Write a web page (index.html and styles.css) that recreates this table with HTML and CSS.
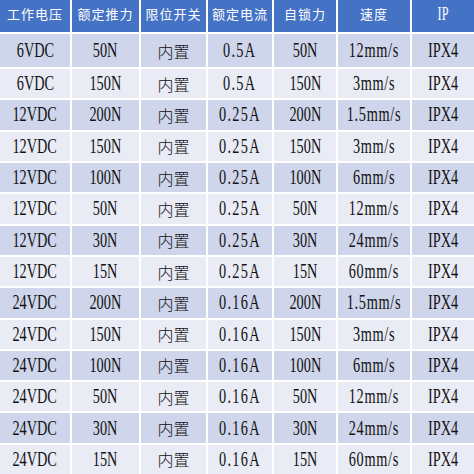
FILE: index.html
```html
<!DOCTYPE html>
<html lang="zh">
<head>
<meta charset="utf-8">
<title>参数表</title>
<link rel="stylesheet" href="styles.css">
</head>
<body>
<div class="table">
  <div class="row head">
    <div class="c"><span class="zh">工作电压</span></div>
    <div class="c"><span class="zh">额定推力</span></div>
    <div class="c"><span class="zh">限位开关</span></div>
    <div class="c"><span class="zh">额定电流</span></div>
    <div class="c"><span class="zh">自锁力</span></div>
    <div class="c"><span class="zh">速度</span></div>
    <div class="c"><span class="l">IP</span></div>
  </div>
  <div class="row odd first">
    <div class="c"><span class="l">6VDC</span></div><div class="c"><span class="l">50N</span></div><div class="c"><span class="zh">内置</span></div><div class="c"><span class="l dec">0.5A</span></div><div class="c"><span class="l">50N</span></div><div class="c"><span class="l spd">12mm/s</span></div><div class="c"><span class="l">IPX4</span></div>
  </div>
  <div class="row even">
    <div class="c"><span class="l">6VDC</span></div><div class="c"><span class="l">150N</span></div><div class="c"><span class="zh">内置</span></div><div class="c"><span class="l dec">0.5A</span></div><div class="c"><span class="l">150N</span></div><div class="c"><span class="l spd">3mm/s</span></div><div class="c"><span class="l">IPX4</span></div>
  </div>
  <div class="row odd">
    <div class="c"><span class="l">12VDC</span></div><div class="c"><span class="l">200N</span></div><div class="c"><span class="zh">内置</span></div><div class="c"><span class="l dec">0.25A</span></div><div class="c"><span class="l">200N</span></div><div class="c"><span class="l spd">1.5mm/s</span></div><div class="c"><span class="l">IPX4</span></div>
  </div>
  <div class="row even">
    <div class="c"><span class="l">12VDC</span></div><div class="c"><span class="l">150N</span></div><div class="c"><span class="zh">内置</span></div><div class="c"><span class="l dec">0.25A</span></div><div class="c"><span class="l">150N</span></div><div class="c"><span class="l spd">3mm/s</span></div><div class="c"><span class="l">IPX4</span></div>
  </div>
  <div class="row odd">
    <div class="c"><span class="l">12VDC</span></div><div class="c"><span class="l">100N</span></div><div class="c"><span class="zh">内置</span></div><div class="c"><span class="l dec">0.25A</span></div><div class="c"><span class="l">100N</span></div><div class="c"><span class="l spd">6mm/s</span></div><div class="c"><span class="l">IPX4</span></div>
  </div>
  <div class="row even">
    <div class="c"><span class="l">12VDC</span></div><div class="c"><span class="l">50N</span></div><div class="c"><span class="zh">内置</span></div><div class="c"><span class="l dec">0.25A</span></div><div class="c"><span class="l">50N</span></div><div class="c"><span class="l spd">12mm/s</span></div><div class="c"><span class="l">IPX4</span></div>
  </div>
  <div class="row odd">
    <div class="c"><span class="l">12VDC</span></div><div class="c"><span class="l">30N</span></div><div class="c"><span class="zh">内置</span></div><div class="c"><span class="l dec">0.25A</span></div><div class="c"><span class="l">30N</span></div><div class="c"><span class="l spd">24mm/s</span></div><div class="c"><span class="l">IPX4</span></div>
  </div>
  <div class="row even">
    <div class="c"><span class="l">12VDC</span></div><div class="c"><span class="l">15N</span></div><div class="c"><span class="zh">内置</span></div><div class="c"><span class="l dec">0.25A</span></div><div class="c"><span class="l">15N</span></div><div class="c"><span class="l spd">60mm/s</span></div><div class="c"><span class="l">IPX4</span></div>
  </div>
  <div class="row odd">
    <div class="c"><span class="l">24VDC</span></div><div class="c"><span class="l">200N</span></div><div class="c"><span class="zh">内置</span></div><div class="c"><span class="l dec">0.16A</span></div><div class="c"><span class="l">200N</span></div><div class="c"><span class="l spd">1.5mm/s</span></div><div class="c"><span class="l">IPX4</span></div>
  </div>
  <div class="row even">
    <div class="c"><span class="l">24VDC</span></div><div class="c"><span class="l">150N</span></div><div class="c"><span class="zh">内置</span></div><div class="c"><span class="l dec">0.16A</span></div><div class="c"><span class="l">150N</span></div><div class="c"><span class="l spd">3mm/s</span></div><div class="c"><span class="l">IPX4</span></div>
  </div>
  <div class="row odd">
    <div class="c"><span class="l">24VDC</span></div><div class="c"><span class="l">100N</span></div><div class="c"><span class="zh">内置</span></div><div class="c"><span class="l dec">0.16A</span></div><div class="c"><span class="l">100N</span></div><div class="c"><span class="l spd">6mm/s</span></div><div class="c"><span class="l">IPX4</span></div>
  </div>
  <div class="row even">
    <div class="c"><span class="l">24VDC</span></div><div class="c"><span class="l">50N</span></div><div class="c"><span class="zh">内置</span></div><div class="c"><span class="l dec">0.16A</span></div><div class="c"><span class="l">50N</span></div><div class="c"><span class="l spd">12mm/s</span></div><div class="c"><span class="l">IPX4</span></div>
  </div>
  <div class="row odd">
    <div class="c"><span class="l">24VDC</span></div><div class="c"><span class="l">30N</span></div><div class="c"><span class="zh">内置</span></div><div class="c"><span class="l dec">0.16A</span></div><div class="c"><span class="l">30N</span></div><div class="c"><span class="l spd">24mm/s</span></div><div class="c"><span class="l">IPX4</span></div>
  </div>
  <div class="row even">
    <div class="c"><span class="l">24VDC</span></div><div class="c"><span class="l">15N</span></div><div class="c"><span class="zh">内置</span></div><div class="c"><span class="l dec">0.16A</span></div><div class="c"><span class="l">15N</span></div><div class="c"><span class="l spd">60mm/s</span></div><div class="c"><span class="l">IPX4</span></div>
  </div>
</div>
</body>
</html>
```

FILE: styles.css
```css
html, body {
  margin: 0;
  padding: 0;
  background: #ffffff;
}

.table {
  width: 474px;
  height: 474px;
  display: flex;
  flex-direction: column;
  gap: 2px;
  background: #ffffff;
  overflow: hidden;
}

.row {
  display: flex;
  gap: 2px;
  flex: 1 1 0;
  min-height: 0;
}

.row.head {
  flex: 0 0 32px;
  background: #ffffff;
}

.row.first {
  flex: 0 0 33px;
}

.c {
  display: flex;
  align-items: center;
  justify-content: center;
  overflow: hidden;
  color: #111111;
}

.c:nth-child(1) { width: 70px; }
.c:nth-child(2) { width: 67px; }
.c:nth-child(3) { width: 65px; }
.c:nth-child(4) { width: 64px; }
.c:nth-child(5) { width: 62px; }
.c:nth-child(6) { width: 72px; }
.c:nth-child(7) { width: 62px; }

.odd .c { background: #cfd5ea; }
.even .c { background: #e9ebf5; }

.head .c {
  background: #4472c4;
  color: #ffffff;
  padding-bottom: 5px;
  box-sizing: border-box;
}

.l {
  display: inline-block;
  font-family: "Liberation Serif", "Times New Roman", serif;
  font-size: 21px;
  line-height: 1;
  transform: scaleX(0.68);
  white-space: nowrap;
}

.l.dec {
  letter-spacing: 2px;
}

.l.spd {
  letter-spacing: 1px;
}

.zh {
  font-family: "Noto Sans CJK SC", "Noto Sans", sans-serif;
  font-size: 16px;
  font-weight: 300;
  line-height: 1;
  white-space: nowrap;
}

.head .zh {
  font-size: 13px;
  font-weight: 400;
  letter-spacing: 1px;
}

.head .l {
  font-size: 18px;
}
```
